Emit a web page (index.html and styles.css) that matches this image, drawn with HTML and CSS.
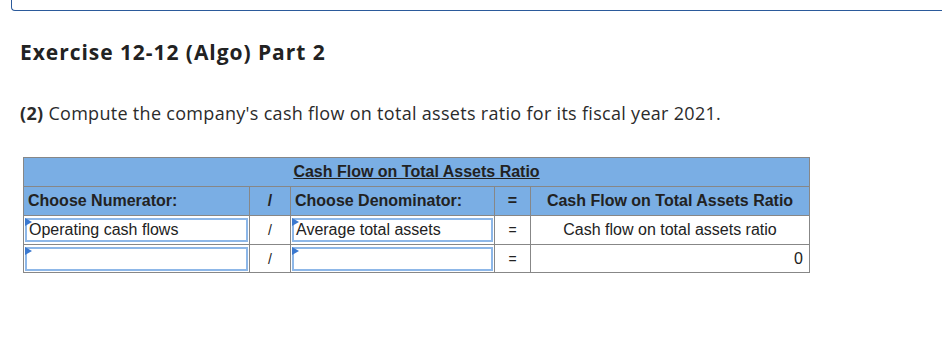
FILE: index.html
```html
<!DOCTYPE html>
<html lang="en">
<head>
    <meta charset="UTF-8">
    <meta name="viewport" content="width=device-width, initial-scale=1.0">
    <title>Exercise 12-12 (Algo) Part 2</title>
    <link rel="stylesheet" href="styles.css">
</head>
<body>

    <div class="prev-box"></div>

    <div class="content">
        <h2 class="title">Exercise 12-12 (Algo) Part 2</h2>
        <p class="question"><b>(2)</b> Compute the company's cash flow on total assets ratio for its fiscal year 2021.</p>

        <table class="ratio">
            <colgroup>
                <col class="c-num">
                <col class="c-op">
                <col class="c-den">
                <col class="c-eq">
                <col class="c-res">
            </colgroup>
            <tr class="head">
                <th colspan="5" class="caption"><u>Cash Flow on Total Assets Ratio</u></th>
            </tr>
            <tr class="head">
                <th class="left">Choose Numerator:</th>
                <th>/</th>
                <th class="left">Choose Denominator:</th>
                <th>=</th>
                <th>Cash Flow on Total Assets Ratio</th>
            </tr>
            <tr>
                <td class="pick"><div class="field">Operating cash flows</div></td>
                <td class="op">/</td>
                <td class="pick"><div class="field">Average total assets</div></td>
                <td class="op">=</td>
                <td class="mid">Cash flow on total assets ratio</td>
            </tr>
            <tr class="last">
                <td class="pick"><div class="field"></div></td>
                <td class="op">/</td>
                <td class="pick"><div class="field"></div></td>
                <td class="op">=</td>
                <td class="num">0</td>
            </tr>
        </table>
    </div>

</body>
</html>
```

FILE: styles.css
```css
body {
    margin: 0;
    font-family: "Open Sans", "Lato", sans-serif;
    color: #1f1f1f;
}
.prev-box {
    height: 10px;
    margin-left: 11px;
    border-left: 1px solid #2b5a9b;
    border-bottom: 1px solid #2b5a9b;
    border-bottom-left-radius: 4px;
}
.content {
    padding: 0 0 0 20px;
}
.title {
    margin: 28px 0 0;
    font-size: 21px;
    line-height: 26px;
    font-weight: 700;
    letter-spacing: 0.95px;
    color: #222;
}
.question {
    margin: 36px 0 0;
    font-size: 18px;
    line-height: 24px;
    letter-spacing: 0.3px;
    color: #2b2b2b;
}
.question b {
    font-weight: 700;
}
.ratio {
    margin: 32px 0 0 3px;
    border-collapse: collapse;
    font-family: "Liberation Sans", Arial, sans-serif;
    font-size: 16px;
    color: #222;
    table-layout: fixed;
}
.c-num { width: 226px; }
.c-op { width: 41px; }
.c-den { width: 204px; }
.c-eq { width: 36px; }
.c-res { width: 279px; }
.ratio tr {
    height: 29px;
}
.ratio tr.last {
    height: 28px;
}
.ratio th,
.ratio td {
    border: 1px solid #878787;
    padding: 0 4px;
    line-height: 18px;
    text-align: center;
}
.ratio .head th {
    background-color: #7aaee4;
    font-weight: bold;
}
.ratio th.left {
    text-align: left;
}
.ratio td.op {
    font-size: 14px;
}
.ratio td.num {
    text-align: right;
    padding-right: 6px;
}
.ratio td.pick {
    padding: 1px;
    text-align: left;
}
.field {
    position: relative;
    height: 20px;
    line-height: 20px;
    border: 2px solid #8db7e8;
    padding: 0 2px;
    background: #fff;
    white-space: nowrap;
}
/* little marker at the corner of each dropdown */
.field::before {
    content: "";
    position: absolute;
    top: -2px;
    left: -2px;
    border-top: 4px solid transparent;
    border-bottom: 4px solid transparent;
    border-left: 7px solid #3a78cf;
}
```
